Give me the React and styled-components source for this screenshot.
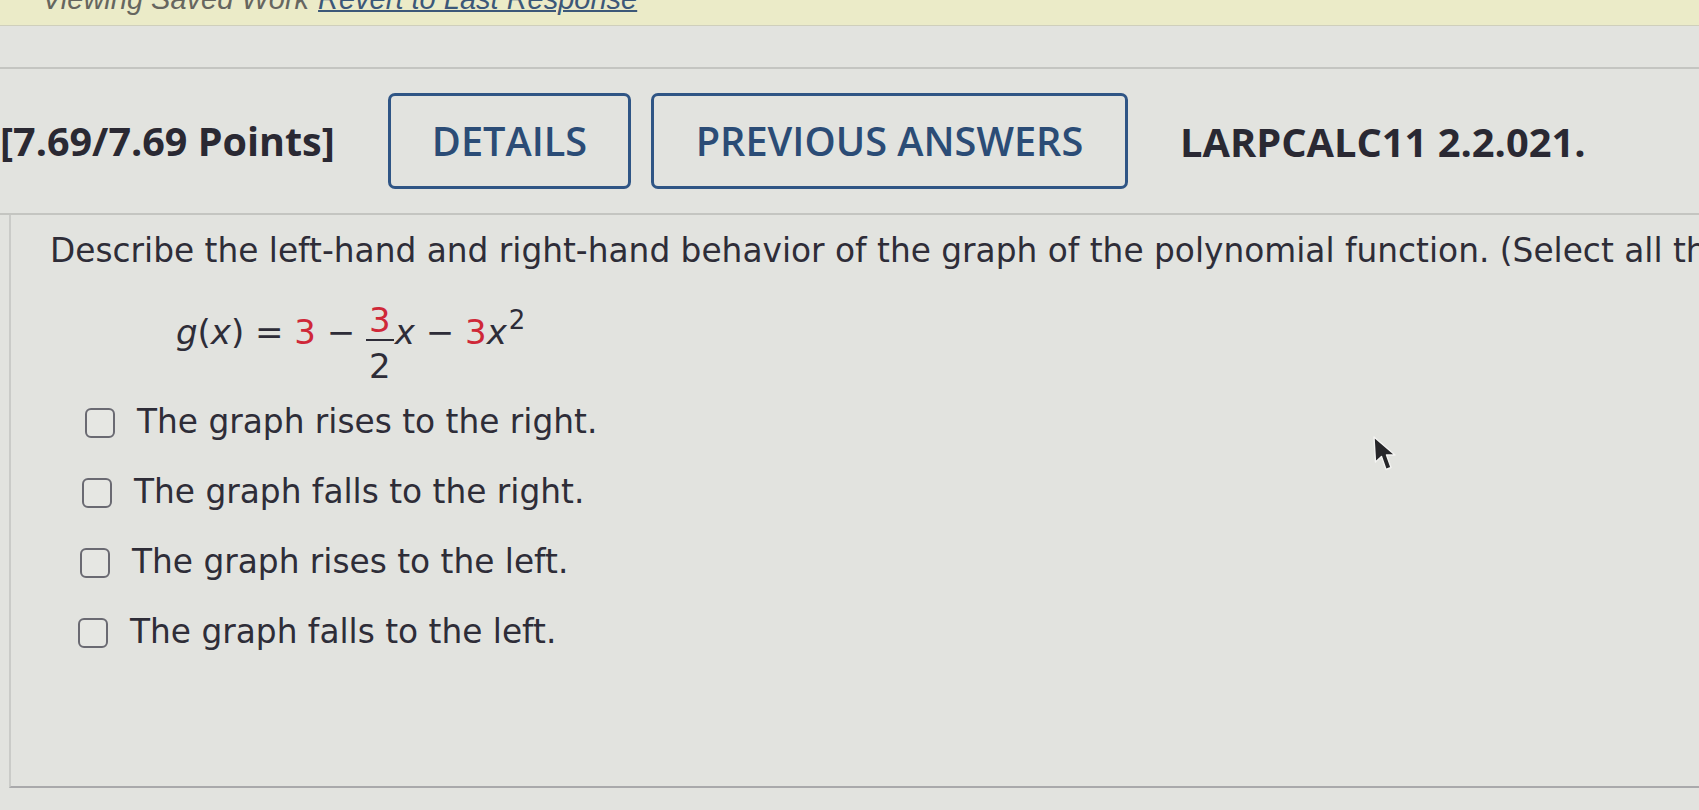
import React from 'react';
import styled, { createGlobalStyle } from 'styled-components';

const GlobalStyle = createGlobalStyle`
  html, body {
    margin: 0;
    padding: 0;
    background: #e2e3df;
    overflow: hidden;
  }
`;

const Page = styled.div`
  position: relative;
  width: 1699px;
  height: 810px;
  overflow: hidden;
  background: #e2e3df;
  color: #2c2b35;
`;

const Banner = styled.div`
  height: 25px;
  background: #ebebc8;
  border-bottom: 1px solid #cfcfbc;
  overflow: hidden;
  padding-left: 42px;
`;

const BannerText = styled.div`
  font-family: "Liberation Sans", Arial, sans-serif;
  font-style: italic;
  font-size: 29px;
  line-height: 30px;
  margin-top: -16px;
  color: #66665f;
  white-space: nowrap;

  a {
    color: #3c5878;
    text-decoration: underline;
    text-decoration-thickness: 2px;
    margin-left: 9px;
  }
`;

const Spacer = styled.div`
  height: 41px;
  border-bottom: 2px solid #c4c5c1;
`;

const Header = styled.div`
  height: 144px;
  display: flex;
  align-items: center;
  gap: 20px;
  border-bottom: 2px solid #c4c5c1;
  font-family: "Open Sans", sans-serif;
  white-space: nowrap;
`;

const Points = styled.div`
  flex: none;
  width: 368px;
  font-weight: 700;
  font-size: 39.5px;
  color: #2a2933;
`;

const TabBox = styled.div`
  box-sizing: border-box;
  flex: none;
  height: 96px;
  width: ${p => p.w}px;
  display: flex;
  align-items: center;
  justify-content: center;
  border: 3px solid #2f5585;
  border-radius: 7px;
  font-weight: 600;
  font-size: 39.7px;
  color: #2b4c76;
`;

const Code = styled.div`
  margin-left: 32px;
  font-weight: 700;
  font-size: 39.8px;
  color: #2a2933;
`;

const Content = styled.div`
  height: 573px;
  margin-left: 9px;
  border-left: 2px solid #cacbc8;
  border-bottom: 2px solid #a9a9ab;
  padding-top: 17px;
  box-sizing: border-box;
  font-family: "DejaVu Sans", Verdana, sans-serif;
  font-size: 32.8px;
  line-height: 1.2;
  color: #2e2d38;
`;

const Question = styled.div`
  padding-left: 39px;
  white-space: nowrap;
  overflow: hidden;
`;

const Equation = styled.div`
  display: flex;
  align-items: center;
  margin-top: 10px;
  padding-left: 165px;
  font-size: 34px;
  white-space: pre;
`;

const Part = styled.span`
  display: inline-block;
`;

const Var = styled.span`
  font-style: italic;
`;

const Red = styled.span`
  color: #cf2838;
`;

const Fraction = styled.span`
  display: inline-flex;
  flex-direction: column;
  align-items: center;
  margin-top: 22px;
  margin-right: 1px;
  line-height: 1;
`;

const Numer = styled.span`
  padding: 0 3px 2px;
  border-bottom: 2px solid #2e2d38;
  color: #cf2838;
`;

const Denom = styled.span`
  padding-top: 8px;
`;

const Sup = styled.span`
  font-size: 26px;
  line-height: 0;
  vertical-align: 15px;
  margin-left: 2px;
`;

const Options = styled.div`
  margin-top: 20px;
  display: flex;
  flex-direction: column;
  gap: 30.6px;
`;

const OptionRow = styled.label`
  display: flex;
  align-items: center;
  gap: 22px;
  padding-left: ${p => p.indent}px;
`;

const Box = styled.span`
  box-sizing: border-box;
  flex: none;
  width: 30px;
  height: 30px;
  border: 2.5px solid #6a6a72;
  border-radius: 6px;
  background: #e6e7e3;
`;

const Cursor = styled.svg`
  position: absolute;
  left: 1372px;
  top: 435px;
`;

const options = [
  { text: 'The graph rises to the right.', indent: 74 },
  { text: 'The graph falls to the right.', indent: 71 },
  { text: 'The graph rises to the left.', indent: 69 },
  { text: 'The graph falls to the left.', indent: 67 },
];

export default function App() {
  return (
    <Page>
      <GlobalStyle />
      <Banner>
        <BannerText>
          Viewing Saved Work<a>Revert to Last Response</a>
        </BannerText>
      </Banner>
      <Spacer />
      <Header>
        <Points>[7.69/7.69 Points]</Points>
        <TabBox w={243}>DETAILS</TabBox>
        <TabBox w={477}>PREVIOUS ANSWERS</TabBox>
        <Code>LARPCALC11 2.2.021.</Code>
      </Header>
      <Content>
        <Question>
          Describe the left-hand and right-hand behavior of the graph of the polynomial function. (Select all that apply.)
        </Question>
        <Equation>
          <Part>
            <Var>g</Var>(<Var>x</Var>) = <Red>3</Red>{' − '}
          </Part>
          <Fraction>
            <Numer>3</Numer>
            <Denom>2</Denom>
          </Fraction>
          <Part>
            <Var>x</Var>{' − '}<Red>3</Red><Var>x</Var><Sup>2</Sup>
          </Part>
        </Equation>
        <Options>
          {options.map(o => (
            <OptionRow key={o.text} indent={o.indent}>
              <Box />
              <span>{o.text}</span>
            </OptionRow>
          ))}
        </Options>
      </Content>
      <Cursor width="26" height="38" viewBox="0 0 26 38">
        <path
          d="M2 2 L3.5 27 L9.5 21.5 L14 34.5 L19 32.5 L14.5 20 L23 20 Z"
          fill="#262629"
          stroke="#f4f4f2"
          strokeWidth="1.4"
          strokeLinejoin="round"
        />
      </Cursor>
    </Page>
  );
}
